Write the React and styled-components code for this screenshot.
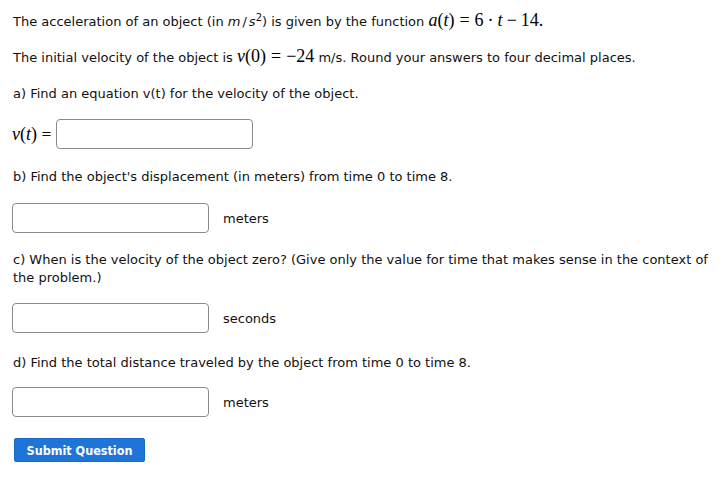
import React from "react";
import styled, { createGlobalStyle } from "styled-components";

const Global = createGlobalStyle`
  html, body { margin: 0; padding: 0; background: #fff; }
  body { font-family: "DejaVu Sans", sans-serif; font-size: 13px; color: #111; }
`;

const Page = styled.div`
  display: flex;
  flex-direction: column;
  align-items: flex-start;
  padding: 13px 8px 0 12px;
`;

const Para = styled.p`
  margin: 0 0 ${(p) => p.$mb ?? 18}px 0;
  line-height: 18px;
  padding-left: 1px;
`;

const Math = styled.span`
  font-family: "Liberation Serif", "DejaVu Serif", serif;
  font-size: 18px;
  line-height: 0;
  white-space: nowrap;
  color: #000;
`;

const Mi = styled.i`
  font-style: italic;
`;

const Mo = styled.span`
  margin: 0 ${(p) => (p.$rel ? 5 : 4)}px;
`;

const Unit = styled.span`
  font-style: italic;
  white-space: nowrap;
`;

const Slash = styled.span`
  font-style: normal;
  margin: 0 2px;
`;

const Sup = styled.sup`
  font-size: 10px;
  line-height: 0;
  font-style: normal;
`;

const Row = styled.div`
  display: flex;
  align-items: center;
  gap: ${(p) => p.$gap ?? 14}px;
  margin-bottom: ${(p) => p.$mb ?? 18}px;
`;

const Label = styled.span`
  line-height: 18px;
  display: flex;
  align-items: center;
  gap: 4px;
`;

const Input = styled.input`
  width: 197px;
  height: 30px;
  box-sizing: border-box;
  border: 1px solid #8a8a8a;
  border-radius: 4px;
  background: #fff;
  margin: 0;
`;

const UnitLabel = styled.span`
  font-size: 13px;
`;

const Button = styled.button`
  margin-left: 2px;
  width: 131px;
  height: 24px;
  background: #1f74d7;
  color: #fff;
  border: 1px solid #1a6ac8;
  border-radius: 2px;
  font-family: "DejaVu Sans Condensed", "DejaVu Sans", sans-serif;
  font-weight: bold;
  font-size: 12.5px;
  padding: 0;
`;

export default function App() {
  return (
    <>
      <Global />
      <Page>
        <Para>
          The acceleration of an object (in <Unit>m<Slash>/</Slash>s<Sup>2</Sup></Unit>) is given by the function{" "}
          <Math><Mi>a</Mi>(<Mi>t</Mi>)<Mo $rel>=</Mo>6<Mo>·</Mo><Mi>t</Mi><Mo>−</Mo>14.</Math>
        </Para>
        <Para>
          The initial velocity of the object is <Math><Mi>v</Mi>(0)<Mo $rel>=</Mo>−24</Math> m/s. Round your answers to four decimal places.
        </Para>
        <Para $mb={16}>a) Find an equation v(t) for the velocity of the object.</Para>
        <Row $gap={4} $mb={19}>
          <Label><Math><Mi>v</Mi>(<Mi>t</Mi>)</Math><span>=</span></Label>
          <Input />
        </Row>
        <Para $mb={17}>b) Find the object's displacement (in meters) from time 0 to time 8.</Para>
        <Row>
          <Input />
          <UnitLabel>meters</UnitLabel>
        </Row>
        <Para $mb={16}>c) When is the velocity of the object zero? (Give only the value for time that makes sense in the context of the problem.)</Para>
        <Row $mb={21}>
          <Input />
          <UnitLabel>seconds</UnitLabel>
        </Row>
        <Para $mb={15}>d) Find the total distance traveled by the object from time 0 to time 8.</Para>
        <Row $mb={21}>
          <Input />
          <UnitLabel>meters</UnitLabel>
        </Row>
        <Button>Submit Question</Button>
      </Page>
    </>
  );
}
